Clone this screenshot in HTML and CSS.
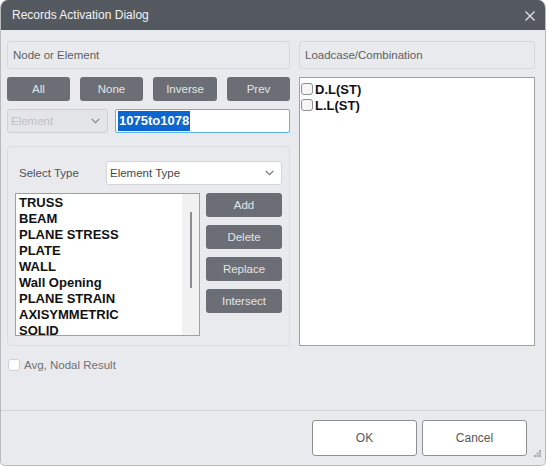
FILE: index.html
```html
<!DOCTYPE html>
<html>
<head>
<meta charset="utf-8">
<link rel="stylesheet" href="styles.css">
</head>
<body>
<div class="dialog">
  <div class="titlebar">
    <span class="title">Records Activation Dialog</span>
    <svg class="close" width="10" height="10" viewBox="0 0 10 10"><path d="M0.5 0.5L9.5 9.5M9.5 0.5L0.5 9.5" stroke="#e2e3e5" stroke-width="1.3" fill="none"/></svg>
  </div>
  <div class="main">
    <div class="left">
      <div class="hdr">Node or Element</div>
      <div class="btnrow">
        <div class="dbtn">All</div>
        <div class="dbtn">None</div>
        <div class="dbtn wide">Inverse</div>
        <div class="dbtn">Prev</div>
      </div>
      <div class="inrow">
        <div class="sel disabled"><span>Element</span>
          <svg width="9" height="6" viewBox="0 0 9 6"><path d="M0.8 1L4.5 4.6L8.2 1" stroke="#8a8b8e" stroke-width="1.3" fill="none"/></svg>
        </div>
        <div class="txt"><span class="hl">1075to1078</span></div>
      </div>
      <div class="group">
        <div class="typerow">
          <span class="lbl">Select Type</span>
          <div class="sel white"><span>Element Type</span>
            <svg width="9" height="6" viewBox="0 0 9 6"><path d="M0.8 1L4.5 4.6L8.2 1" stroke="#7d7e81" stroke-width="1.3" fill="none"/></svg>
          </div>
        </div>
        <div class="listrow">
          <div class="list">
            <div class="items">
              <div class="it">TRUSS</div>
              <div class="it">BEAM</div>
              <div class="it">PLANE STRESS</div>
              <div class="it">PLATE</div>
              <div class="it">WALL</div>
              <div class="it">Wall Opening</div>
              <div class="it">PLANE STRAIN</div>
              <div class="it">AXISYMMETRIC</div>
              <div class="it">SOLID</div>
            </div>
            <div class="sbar"><div class="thumb"></div></div>
          </div>
          <div class="sidebtns">
            <div class="dbtn side">Add</div>
            <div class="dbtn side">Delete</div>
            <div class="dbtn side">Replace</div>
            <div class="dbtn side">Intersect</div>
          </div>
        </div>
      </div>
      <div class="avg"><span class="cb round"></span><span>Avg, Nodal Result</span></div>
    </div>
    <div class="right">
      <div class="hdr">Loadcase/Combination</div>
      <div class="lclist">
        <div class="lc"><span class="cb"></span><span>D.L(ST)</span></div>
        <div class="lc"><span class="cb"></span><span>L.L(ST)</span></div>
      </div>
    </div>
  </div>
  <div class="footer">
    <div class="fbtn">OK</div>
    <div class="fbtn">Cancel</div>
    <svg class="grip" width="7" height="7" viewBox="0 0 7 7">
      <rect x="5" y="0" width="2" height="2" fill="#a9aaad"/>
      <rect x="2.5" y="2.5" width="2" height="2" fill="#a9aaad"/>
      <rect x="5" y="2.5" width="2" height="2" fill="#a9aaad"/>
      <rect x="0" y="5" width="2" height="2" fill="#a9aaad"/>
      <rect x="2.5" y="5" width="2" height="2" fill="#a9aaad"/>
      <rect x="5" y="5" width="2" height="2" fill="#a9aaad"/>
    </svg>
  </div>
</div>
</body>
</html>
```
FILE: styles.css
```css
* { box-sizing: border-box; }
html, body { margin: 0; padding: 0; background: #ffffff; }
body { font-family: "Liberation Sans", Arial, sans-serif; font-size: 12px; color: #222; }

.dialog {
  width: 546px; height: 466px;
  background: #e9eaed;
  border: 1px solid #b9babd;
  border-top: none;
  border-radius: 8px 8px 5px 5px;
  overflow: hidden;
  display: flex; flex-direction: column;
}
.titlebar {
  height: 30px; flex: none;
  background: #54595f;
  color: #f2f2f3;
  display: flex; align-items: center; justify-content: space-between;
  padding: 0 10px 0 11px;
  font-size: 12px;
}
.close { margin-top: 1px; }

.main {
  flex: 1;
  display: flex;
  gap: 9px;
  padding: 11px 0 0 6px;
}
.left { width: 283px; display: flex; flex-direction: column; }
.right { width: 236px; display: flex; flex-direction: column; }

.hdr {
  height: 28px;
  border: 1px solid #d6d7da;
  border-radius: 3px;
  padding-left: 5px;
  display: flex; align-items: center;
  color: #5e6064;
  font-size: 11.5px;
}

.btnrow { display: flex; justify-content: space-between; margin-top: 8px; }
.dbtn {
  width: 63px; height: 24px;
  background: #6b6f75;
  color: #e3e4e6;
  border-radius: 3px;
  display: flex; align-items: center; justify-content: center;
  font-size: 11.5px;
}
.dbtn.wide { width: 64px; }

.inrow { display: flex; gap: 7px; margin-top: 8px; }
.sel {
  height: 24px;
  border: 1px solid #cfd0d3;
  border-radius: 3px;
  display: flex; align-items: center; justify-content: space-between;
  padding: 0 7px 0 3px;
  font-size: 11.5px;
}
.sel.disabled { width: 101px; background: #e4e5e8; color: #bfc0c3; }
.sel.white { width: 176px; background: #fff; color: #45474a; border-color: #d3d4d7; }
.txt {
  width: 175px; height: 24px;
  background: #fff;
  border: 1px solid #5ab6ea;
  border-radius: 2px;
  display: flex; align-items: center;
  padding-left: 2px;
}
.hl {
  background: #0d66d0;
  color: #fff;
  font-weight: bold;
  font-size: 13px;
  line-height: 20px;
  padding: 0 1px;
}

.group {
  margin-top: 13px;
  height: 200px;
  border: 1px solid #dcdde0;
  border-radius: 4px;
  padding: 14px 7px 0 7px;
}
.typerow { display: flex; align-items: center; justify-content: space-between; }
.lbl { color: #505256; font-size: 11.5px; padding-left: 4px; }
.listrow { display: flex; justify-content: space-between; margin-top: 8px; }
.list {
  width: 185px; height: 143px;
  background: #fff;
  border: 1px solid #9fa0a3;
  display: flex;
  overflow: hidden;
}
.items { flex: 1; padding: 1px 0 0 3px; }
.it { font-weight: bold; font-size: 13px; line-height: 16px; color: #111; white-space: nowrap; }
.sbar { width: 17px; background: #f1f1f1; display: flex; justify-content: center; padding-top: 18px; }
.thumb { width: 2px; height: 76px; background: #8c8d90; }
.sidebtns { display: flex; flex-direction: column; gap: 8px; }
.dbtn.side { width: 76px; }

.avg { display: flex; align-items: center; gap: 4px; margin-top: 13px; padding-left: 1px; color: #6f7175; font-size: 11.5px; }
.cb {
  width: 12px; height: 12px;
  border: 1px solid #8d8e91;
  border-radius: 3px;
  background: #f6f6f6;
  flex: none;
}
.cb.round { border-color: #cfd0d3; background: #fff; }

.lclist {
  margin-top: 8px;
  height: 269px;
  background: #fff;
  border: 1px solid #9fa0a3;
  padding: 3px 0 0 1px;
}
.lc { display: flex; align-items: center; gap: 2px; height: 16px; font-weight: bold; font-size: 13px; color: #111; }

.footer {
  height: 55px; flex: none;
  border-top: 1px solid #d4d5d8;
  display: flex; justify-content: flex-end; gap: 5px;
  padding: 9px 18px 0 0;
  position: relative;
}
.fbtn {
  width: 105px; height: 36px;
  background: #fff;
  border: 1px solid #8f9093;
  border-radius: 3px;
  display: flex; align-items: center; justify-content: center;
  color: #56585c;
  font-size: 12px;
}
.grip { position: absolute; right: 4px; bottom: 8px; }
```
